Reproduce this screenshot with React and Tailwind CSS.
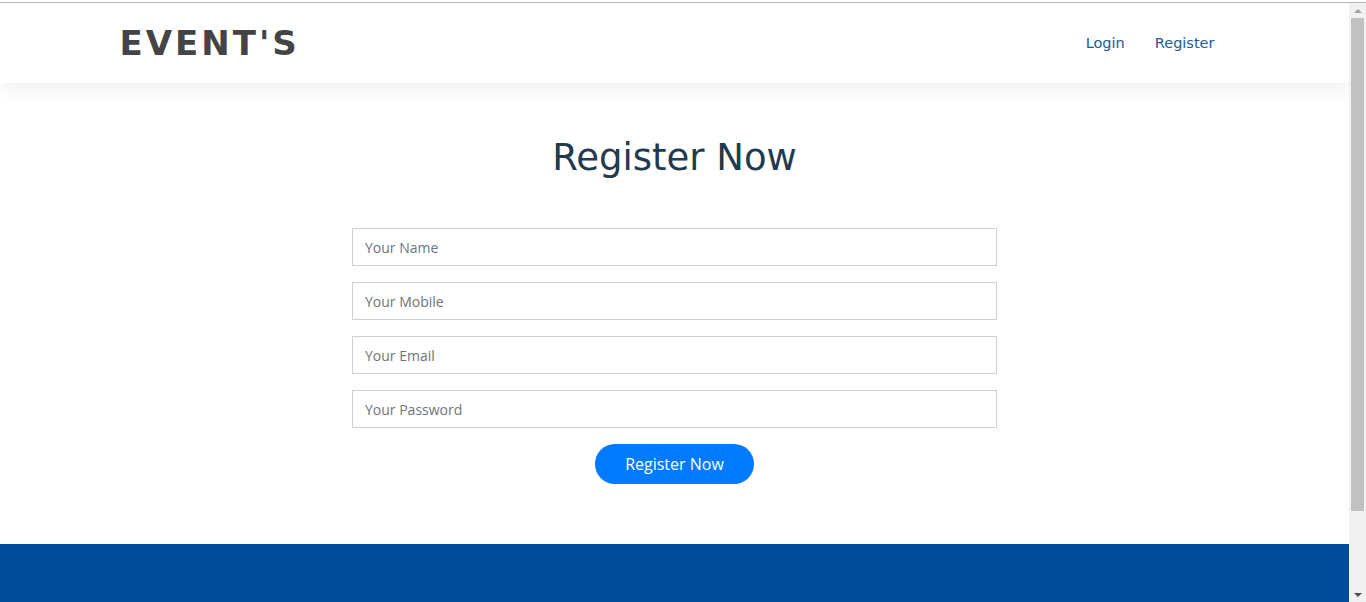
import React from 'react';

const fields = ['Your Name', 'Your Mobile', 'Your Email', 'Your Password'];

const Header = () => (
  <header className="relative z-10 h-[80px] bg-white shadow-[0_6px_16px_rgba(40,40,80,0.07)]">
    <div className="mx-auto flex h-full w-[1140px] items-center justify-between px-[15px]">
      <a href="#" className="font-['DejaVu_Sans',sans-serif] text-[34px] font-bold tracking-[3px] text-[#444444] leading-none">
        EVENT'S
      </a>
      <nav className="flex items-center gap-[30px] pr-[15px] pt-[2px] font-['DejaVu_Sans',sans-serif] text-[14.5px] text-[#215a96]">
        <a href="#">Login</a>
        <a href="#">Register</a>
      </nav>
    </div>
  </header>
);

const RegisterForm = () => (
  <section className="bg-white pb-[60px] pt-[51px]">
    <h1 className="text-center font-['DejaVu_Sans',sans-serif] text-[37px] font-normal leading-[48px] text-[#213a50]">
      Register Now
    </h1>
    <form className="mx-auto mt-[46px] flex w-[645px] flex-col gap-[16px]" onSubmit={(e) => e.preventDefault()}>
      {fields.map((f) => (
        <input
          key={f}
          type={f === 'Your Password' ? 'password' : 'text'}
          placeholder={f}
          className="h-[38px] w-full border border-[#cfcfcf] bg-white px-[12px] font-['Open_Sans',sans-serif] text-[14px] text-[#495057] placeholder:text-[#6c757d] outline-none"
        />
      ))}
      <div className="flex justify-center">
        <button className="h-[40px] w-[159px] rounded-full bg-[#007bff] font-['Open_Sans',sans-serif] text-[16px] text-white">
          Register Now
        </button>
      </div>
    </form>
  </section>
);

const Scrollbar = () => (
  <div className="flex w-[17px] flex-col bg-[#f1f1f1]">
    <div className="flex h-[15px] items-center justify-center">
      <div className="h-0 w-0 border-x-[4px] border-b-[4px] border-x-transparent border-b-[#a3a3a3]" />
    </div>
    <div className="mx-[2px] h-[493px] bg-[#c1c1c1]" />
    <div className="flex-1" />
    <div className="flex h-[15px] items-center justify-center">
      <div className="h-0 w-0 border-x-[4px] border-t-[4px] border-x-transparent border-t-[#505050]" />
    </div>
  </div>
);

export default function App() {
  return (
    <div className="h-[602px] w-full overflow-hidden bg-white">
      <div className="h-[3px] border-b border-[#b5b5b5] bg-white" />
      <div className="flex h-[599px]">
        <div className="flex-1 overflow-hidden">
          <Header />
          <RegisterForm />
          <footer className="h-[200px] bg-[#004c99]" />
        </div>
        <Scrollbar />
      </div>
    </div>
  );
}
